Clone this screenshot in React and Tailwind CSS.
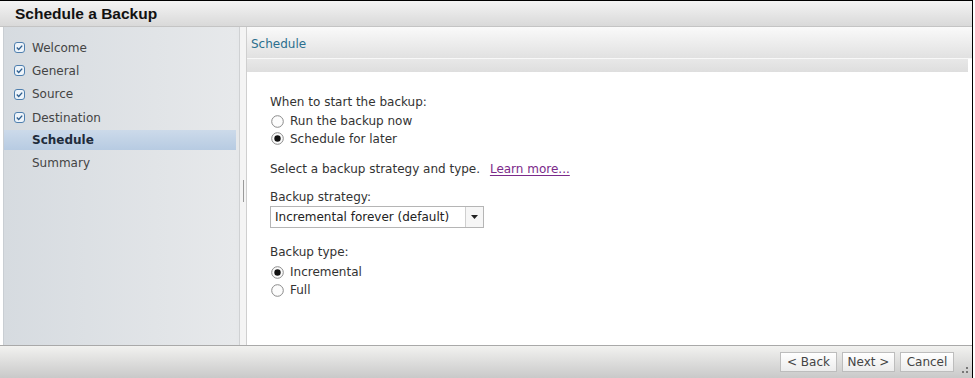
export default function App() {
  const done = ['Welcome', 'General', 'Source', 'Destination'];
  return (
    <div className="w-[975px] h-[378px] bg-white overflow-hidden" style={{ fontFamily: '"DejaVu Sans", Verdana, sans-serif' }}>
      <div className="w-[973px] h-[378px] border-t border-r border-black flex flex-col">
        {/* title bar */}
        <div className="h-[26px] flex items-center pl-[15px] bg-gradient-to-b from-[#f4f4f4] to-[#d9d9d9] border-b border-[#c4c4c4]">
          <span className="text-[15.5px] font-bold text-[#111]" style={{ fontFamily: '"Liberation Sans", Arial, sans-serif' }}>
            Schedule a Backup
          </span>
        </div>

        <div className="flex-1 flex min-h-0">
          {/* sidebar */}
          <div className="w-[233px] ml-[3px] border-l border-[#c9ced3] bg-gradient-to-r from-[#d6dbe0] to-[#e7e9eb] pt-[9px]">
            {done.map(s => (
              <div key={s} className="h-[23.3px] flex items-center pl-[10px] gap-[7px] text-[12px] text-[#444]">
                <svg width="11" height="11" viewBox="0 0 11 11">
                  <rect x="0.5" y="0.5" width="10" height="10" rx="2.5" fill="#eef4fa" stroke="#4f7fae" />
                  <path d="M2.8 5.6 L4.7 7.4 L8.2 3.6" fill="none" stroke="#2f5f8f" strokeWidth="1.4" />
                </svg>
                {s}
              </div>
            ))}
            <div className="h-[20px] mt-[1px] flex items-center pl-[28px] text-[12px] font-bold text-[#1f2c3c] bg-gradient-to-b from-[#ccdaea] to-[#b7cbe2]">
              Schedule
            </div>
            <div className="h-[25px] flex items-center pl-[28px] text-[12px] text-[#444]">Summary</div>
          </div>

          {/* splitter */}
          <div className="w-[10px] flex bg-[#f4f4f4]">
            <div className="w-[3px] bg-[#e6e8ea]" />
            <div className="w-px bg-[#cfd1d3]" />
            <div className="flex-1 flex justify-center pt-[153px]">
              <div className="w-px h-[22px] bg-[#9a9a9a]" />
            </div>
          </div>

          {/* content */}
          <div className="flex-1 border-l border-[#cfcfcf] flex flex-col">
            <div className="h-[31px] flex items-center pl-[4px] pt-[2px] bg-gradient-to-b from-[#fafafa] to-[#e1e1e1] text-[12px] text-[#2b6f8e]">
              Schedule
            </div>
            <div className="h-px bg-[#f8f8f8]" />
            <div className="h-[13px] bg-gradient-to-b from-[#e8e8e8] to-[#dedede] mr-[4px]" />
            <div className="flex-1 pl-[23px] pt-[22px] text-[12px] text-[#333]">
              <div className="h-[16px] leading-[16px]">When to start the backup:</div>
              <Radio label="Run the backup now" cls="mt-[2px] h-[18px]" />
              <Radio label="Schedule for later" checked cls="h-[17px]" />
              <div className="mt-[14px] h-[16px] leading-[16px]">
                Select a backup strategy and type.{' '}
                <span className="ml-[6px] text-[#7b2a8a] underline underline-offset-2">Learn more...</span>
              </div>
              <div className="mt-[12px] h-[16px] leading-[16px]">Backup strategy:</div>
              <div className="mt-[1px] w-[214px] h-[22px] border border-[#b5b5b5] flex items-stretch bg-white">
                <div className="flex-1 flex items-center pl-[4px] text-[#222]">Incremental forever (default)</div>
                <div className="w-[18px] border-l border-[#cfcfcf] flex items-center justify-center bg-[#f6f6f6]">
                  <svg width="7" height="4" viewBox="0 0 7 4"><path d="M0 0 H7 L3.5 4 Z" fill="#222" /></svg>
                </div>
              </div>
              <div className="mt-[16px] h-[16px] leading-[16px]">Backup type:</div>
              <Radio label="Incremental" checked cls="mt-[3px] h-[18px]" />
              <Radio label="Full" cls="h-[18px]" />
            </div>
          </div>
        </div>

        {/* footer */}
        <div className="h-[33px] border-t border-[#a9a9a9] bg-gradient-to-b from-[#f2f2f0] to-[#c9c9c9] flex items-center justify-end pr-[18px] gap-[5px] relative">
          <Btn w="w-[57px]">&lt; Back</Btn>
          <Btn w="w-[53px]">Next &gt;</Btn>
          <Btn w="w-[54px]">Cancel</Btn>
          <svg className="absolute right-[4px] bottom-[5px]" width="6" height="6" viewBox="0 0 6 6">
            <rect x="4" y="0" width="2" height="2" fill="#777" />
            <rect x="4" y="4" width="2" height="2" fill="#777" />
            <rect x="0" y="4" width="2" height="2" fill="#777" />
          </svg>
        </div>
      </div>
    </div>
  );
}

function Radio({ label, checked, cls }) {
  return (
    <div className={`${cls} flex items-center gap-[6px] pl-[1px]`}>
      <svg width="13" height="13" viewBox="0 0 13 13">
        <circle cx="6.5" cy="6.5" r="5.8" fill="#fcfcfc" stroke="#8a8a8a" strokeWidth="1" />
        {checked && <circle cx="6.5" cy="6.5" r="3.2" fill="#111" />}
      </svg>
      <span>{label}</span>
    </div>
  );
}

function Btn({ w, children }) {
  return (
    <div className={`${w} h-[20px] border border-[#bdbdbd] bg-gradient-to-b from-[#ffffff] to-[#ececec] flex items-center justify-center text-[12px] text-[#444]`}>
      {children}
    </div>
  );
}
